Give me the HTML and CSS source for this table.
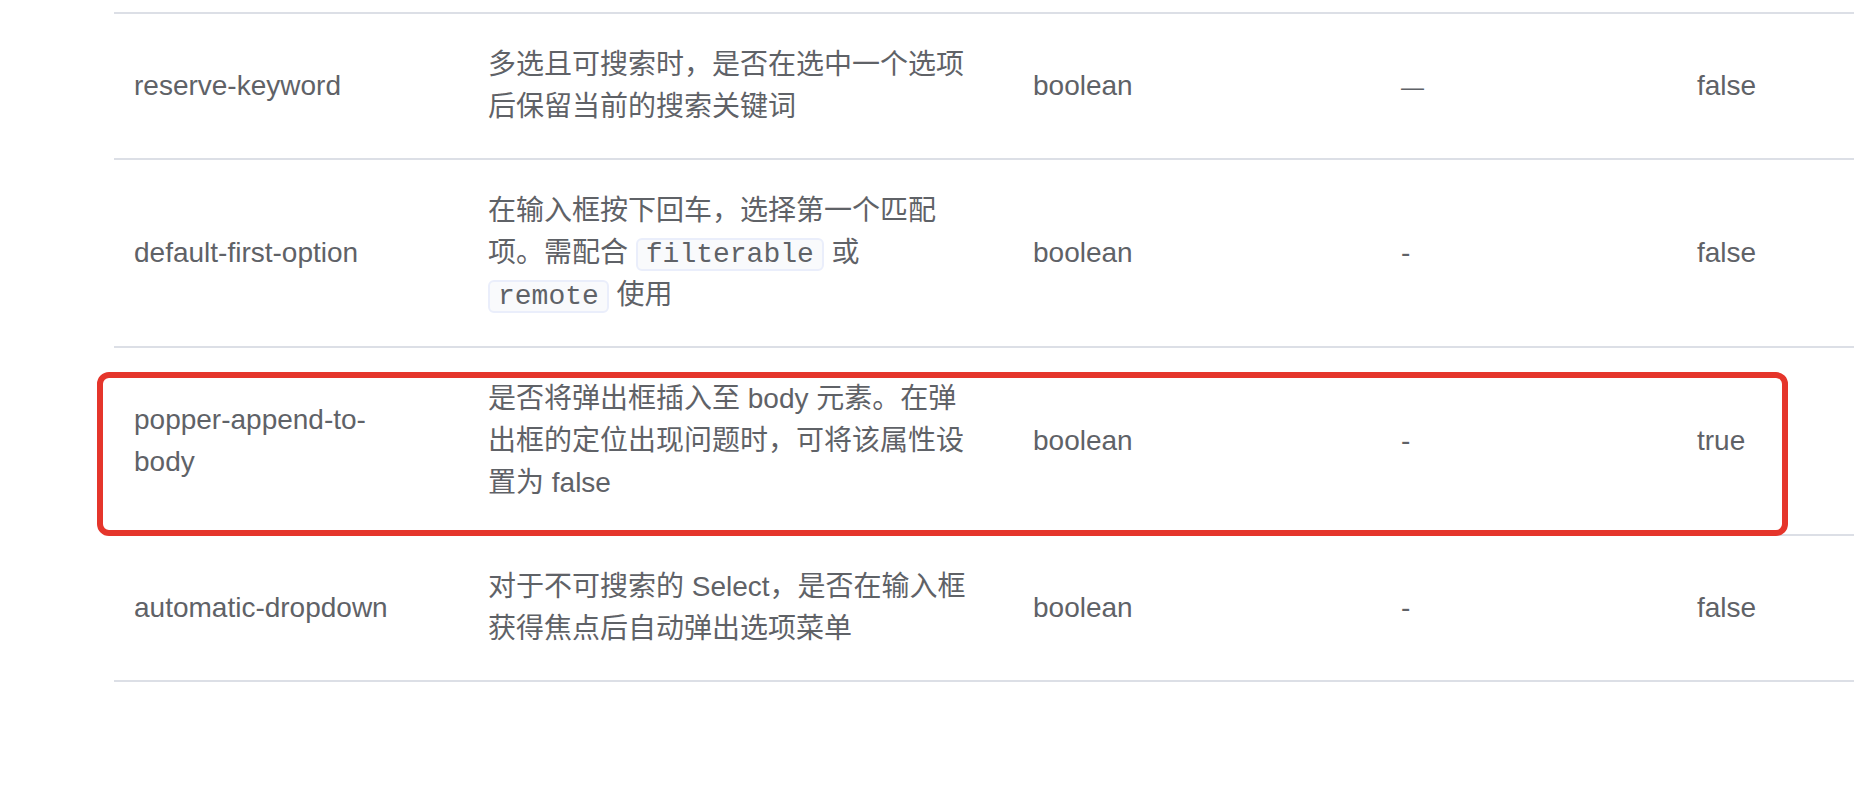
FILE: index.html
```html
<!DOCTYPE html>
<html lang="zh-CN">
<head>
<meta charset="utf-8">
<title>Select Attributes</title>
<link rel="stylesheet" href="styles.css">
</head>
<body>
<div class="page">
  <table class="attr-table">
    <colgroup>
      <col class="c-name">
      <col class="c-desc">
      <col class="c-type">
      <col class="c-opts">
      <col class="c-def">
    </colgroup>
    <tbody>
      <tr>
        <td>reserve-keyword</td>
        <td>多选且可搜索时，是否在选中一个选项后保留当前的搜索关键词</td>
        <td>boolean</td>
        <td><span class="dash">—</span></td>
        <td>false</td>
      </tr>
      <tr>
        <td>default-first-option</td>
        <td>在输入框按下回车，选择第一个匹配项。需配合 <code>filterable</code> 或 <code>remote</code> 使用</td>
        <td>boolean</td>
        <td>-</td>
        <td>false</td>
      </tr>
      <tr>
        <td>popper-append-to-body</td>
        <td>是否将弹出框插入至 body 元素。在弹出框的定位出现问题时，可将该属性设置为 false</td>
        <td>boolean</td>
        <td>-</td>
        <td>true</td>
      </tr>
      <tr>
        <td>automatic-dropdown</td>
        <td>对于不可搜索的 Select，是否在输入框获得焦点后自动弹出选项菜单</td>
        <td>boolean</td>
        <td>-</td>
        <td>false</td>
      </tr>
    </tbody>
  </table>
  <div class="highlight-box"></div>
</div>
</body>
</html>
```

FILE: styles.css
```css
html, body {
  margin: 0;
  padding: 0;
  background: #ffffff;
}

.page {
  position: relative;
  padding: 12px 0 0 114px;
  font-family: "Liberation Sans", "Noto Sans CJK SC", sans-serif;
  font-size: 28px;
  line-height: 42px;
  color: #5f6267;
}

.attr-table {
  width: 1740px;
  table-layout: fixed;
  border-collapse: collapse;
  border-top: 2px solid #dcdfe6;
}

.c-name { width: 344px; }
.c-desc { width: 545px; }
.c-type { width: 368px; }
.c-opts { width: 296px; }
.c-def  { width: 187px; }

.attr-table td {
  padding: 30px 30px;
  border-bottom: 2px solid #dcdfe6;
  vertical-align: middle;
  text-align: left;
}

.attr-table td:first-child {
  padding-left: 20px;
  padding-right: 44px;
}

.dash {
  font-size: 23px;
}

.attr-table code {
  display: inline-block;
  box-sizing: border-box;
  height: 33px;
  font-family: "Liberation Mono", monospace;
  font-size: 28px;
  line-height: 29px;
  color: #5f6267;
  background: #f9fafc;
  border: 2px solid #eaeefb;
  border-radius: 6px;
  padding: 0 8px;
}

.highlight-box {
  position: absolute;
  left: 97px;
  top: 372px;
  width: 1691px;
  height: 164px;
  box-sizing: border-box;
  border: 6px solid #e5352b;
  border-radius: 12px;
  pointer-events: none;
}
```
